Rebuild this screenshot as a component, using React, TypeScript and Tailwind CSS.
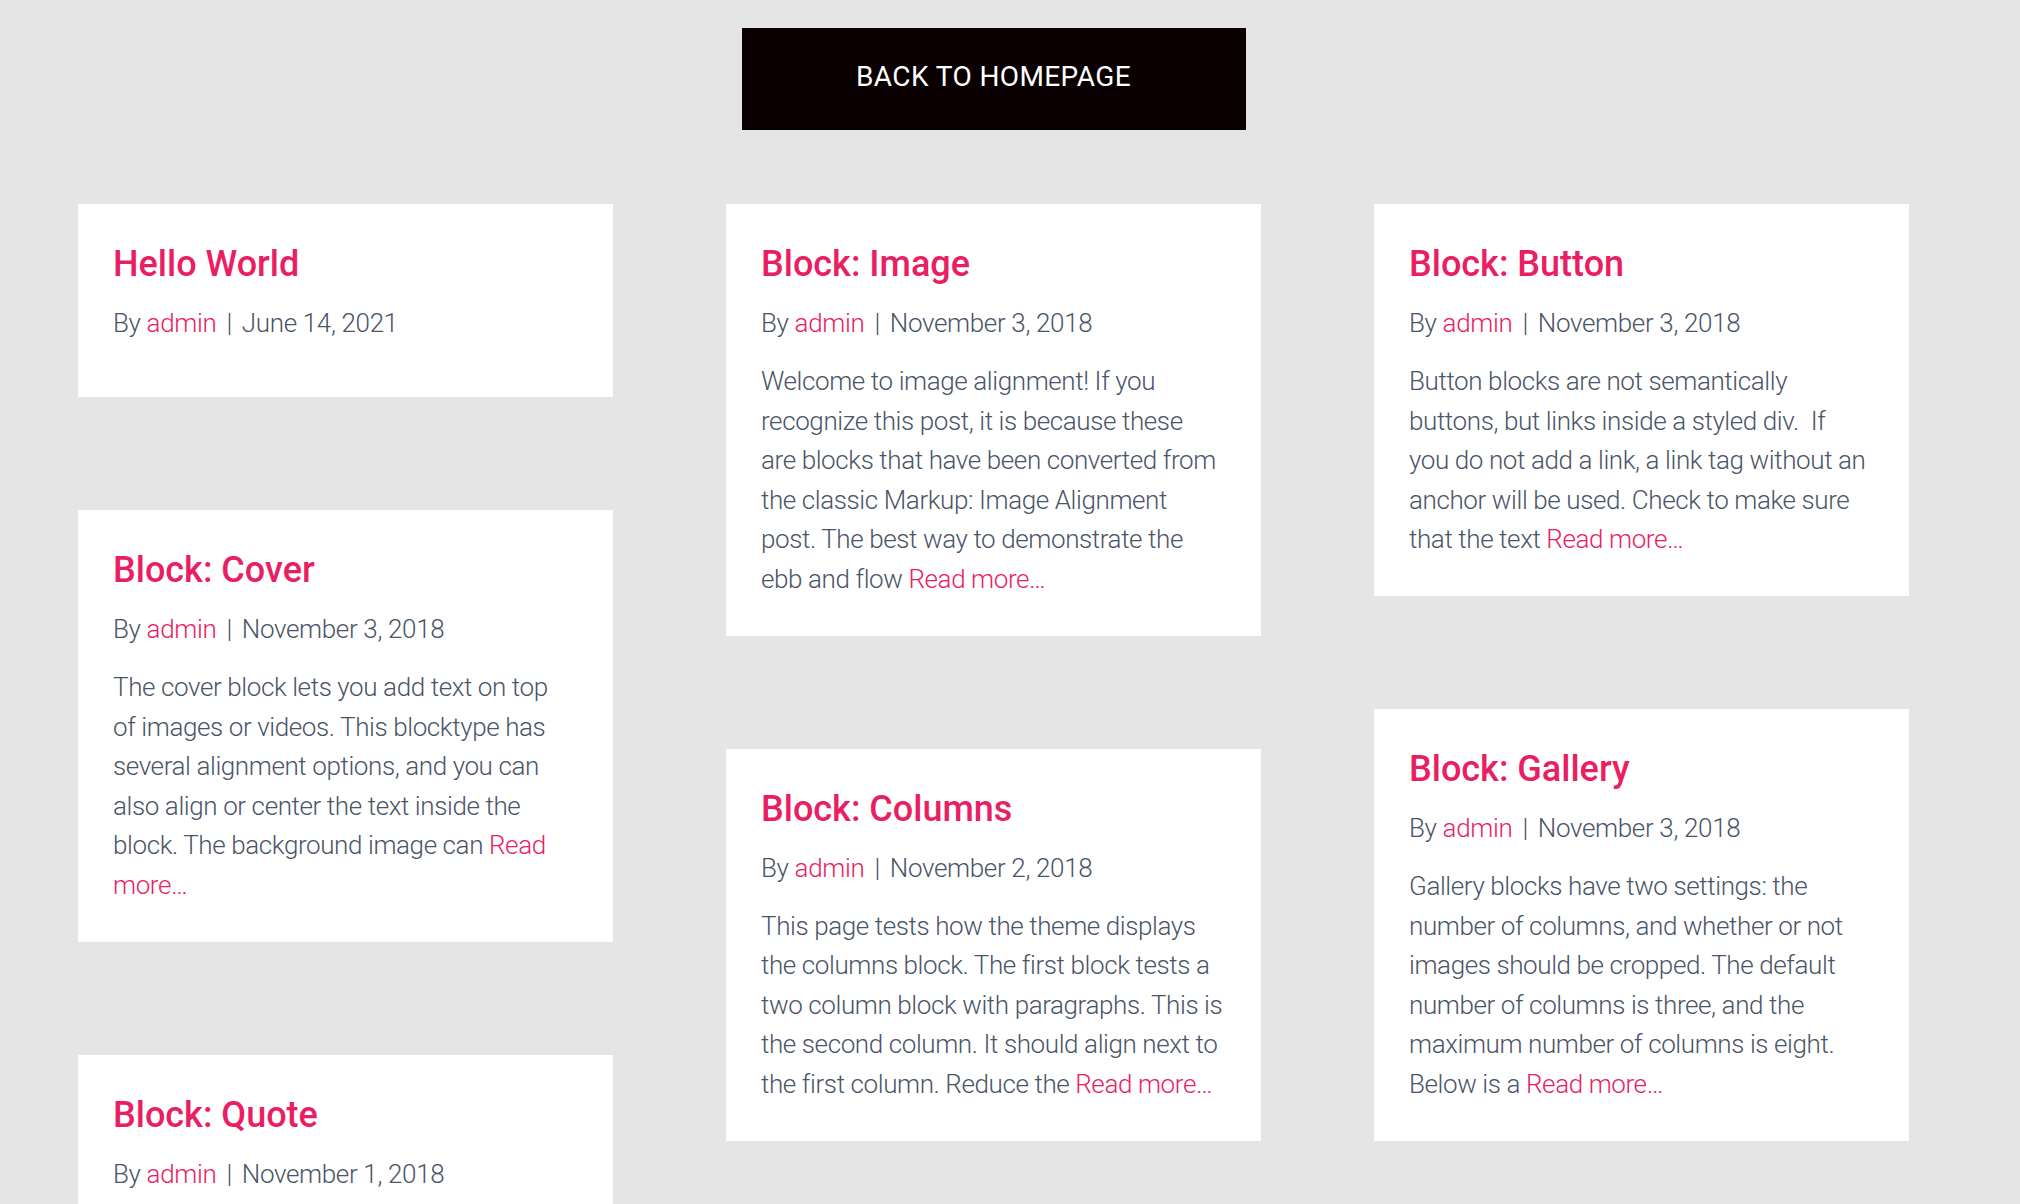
type Post = {
  title: string;
  date: string;
  lines: string[];
  // the "Read more…" link wraps onto its own line in a few cards
  moreBreaks?: boolean;
};

const HELLO: Post = { title: "Hello World", date: "June 14, 2021", lines: [] };

const COVER: Post = {
  title: "Block: Cover",
  date: "November 3, 2018",
  lines: [
    "The cover block lets you add text on top",
    "of images or videos. This blocktype has",
    "several alignment options, and you can",
    "also align or center the text inside the",
    "block. The background image can",
  ],
  moreBreaks: true,
};

const QUOTE: Post = {
  title: "Block: Quote",
  date: "November 1, 2018",
  lines: [
    "Quote blocks are a way to highlight text",
    "that is quoted from another source. This",
    "post tests the different styles of",
  ],
};

const IMAGE: Post = {
  title: "Block: Image",
  date: "November 3, 2018",
  lines: [
    "Welcome to image alignment! If you",
    "recognize this post, it is because these",
    "are blocks that have been converted from",
    "the classic Markup: Image Alignment",
    "post. The best way to demonstrate the",
    "ebb and flow",
  ],
};

const COLUMNS_POST: Post = {
  title: "Block: Columns",
  date: "November 2, 2018",
  lines: [
    "This page tests how the theme displays",
    "the columns block. The first block tests a",
    "two column block with paragraphs. This is",
    "the second column. It should align next to",
    "the first column. Reduce the",
  ],
};

const BUTTON: Post = {
  title: "Block: Button",
  date: "November 3, 2018",
  lines: [
    "Button blocks are not semantically",
    "buttons, but links inside a styled div.\u00a0 If",
    "you do not add a link, a link tag without an",
    "anchor will be used. Check to make sure",
    "that the text",
  ],
};

const GALLERY: Post = {
  title: "Block: Gallery",
  date: "November 3, 2018",
  lines: [
    "Gallery blocks have two settings: the",
    "number of columns, and whether or not",
    "images should be cropped. The default",
    "number of columns is three, and the",
    "maximum number of columns is eight.",
    "Below is a",
  ],
};

const COLUMNS: Post[][] = [
  [HELLO, COVER, QUOTE],
  [IMAGE, COLUMNS_POST],
  [BUTTON, GALLERY],
];

function PostCard({ post }: { post: Post }) {
  const hasExcerpt = post.lines.length > 0;
  return (
    <article className={`bg-white px-[35px] pt-[39px] ${hasExcerpt ? "pb-[36px]" : "pb-[54px]"}`}>
      <h2 className="text-[36px] leading-[43px] font-medium text-[#e91e63]">
        <a href="#">{post.title}</a>
      </h2>
      <div className="mt-[17px] text-[26px] leading-[40px] font-light tracking-[-0.35px] text-[#4a5568]">
        By <a href="#" className="text-[#e91e63]">admin</a>
        <span className="mx-[10px]">|</span>
        {post.date}
      </div>
      {hasExcerpt && (
        <p className="mt-[19px] text-[26px] leading-[39.6px] font-light tracking-[-0.4px] whitespace-nowrap text-[#4a5568]">
          {post.lines.map((line, i) => (
            <span key={i}>
              {line}
              {i < post.lines.length - 1 && <br />}
            </span>
          ))}{" "}
          {post.moreBreaks ? (
            <a href="#" className="text-[#e91e63]">
              Read
              <br />
              more…
            </a>
          ) : (
            <a href="#" className="text-[#e91e63]">
              Read more…
            </a>
          )}
        </p>
      )}
    </article>
  );
}

export default function App() {
  return (
    <div className="min-h-screen bg-[#e5e5e5] font-['Roboto','Liberation_Sans',sans-serif]">
      <div className="w-[1831px] ml-[78px] pt-[28px] pb-[100px]">
        <div className="flex justify-center">
          <a
            href="#"
            className="w-[504px] h-[102px] pb-[5px] flex items-center justify-center bg-[#0a0001] text-white text-[28px] tracking-[0.4px] uppercase"
          >
            Back to Homepage
          </a>
        </div>

        <div className="mt-[74px] flex items-start gap-[113px]">
          {COLUMNS.map((col, i) => (
            <div key={i} className="w-[535px] flex flex-col gap-[113px]">
              {col.map((post) => (
                <PostCard key={post.title} post={post} />
              ))}
            </div>
          ))}
        </div>
      </div>
    </div>
  );
}
